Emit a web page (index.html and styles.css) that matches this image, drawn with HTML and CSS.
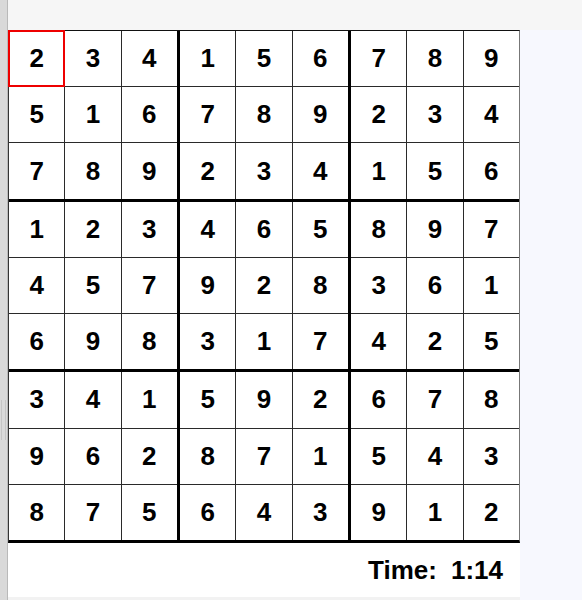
FILE: index.html
```html
<!DOCTYPE html>
<html>
<head>
<meta charset="utf-8">
<link rel="stylesheet" href="styles.css">
</head>
<body>
<div class="window">
  <div class="sidebar"><div class="grip"></div></div>
  <div class="main">
    <div class="topbar"></div>
    <div class="content">
      <div class="panel">
        <div class="board">
          <div class="box">
            <div class="cell selected">2</div><div class="cell">3</div><div class="cell">4</div>
            <div class="cell">5</div><div class="cell">1</div><div class="cell">6</div>
            <div class="cell">7</div><div class="cell">8</div><div class="cell">9</div>
          </div>
          <div class="box">
            <div class="cell">1</div><div class="cell">5</div><div class="cell">6</div>
            <div class="cell">7</div><div class="cell">8</div><div class="cell">9</div>
            <div class="cell">2</div><div class="cell">3</div><div class="cell">4</div>
          </div>
          <div class="box">
            <div class="cell">7</div><div class="cell">8</div><div class="cell">9</div>
            <div class="cell">2</div><div class="cell">3</div><div class="cell">4</div>
            <div class="cell">1</div><div class="cell">5</div><div class="cell">6</div>
          </div>
          <div class="box">
            <div class="cell">1</div><div class="cell">2</div><div class="cell">3</div>
            <div class="cell">4</div><div class="cell">5</div><div class="cell">7</div>
            <div class="cell">6</div><div class="cell">9</div><div class="cell">8</div>
          </div>
          <div class="box">
            <div class="cell">4</div><div class="cell">6</div><div class="cell">5</div>
            <div class="cell">9</div><div class="cell">2</div><div class="cell">8</div>
            <div class="cell">3</div><div class="cell">1</div><div class="cell">7</div>
          </div>
          <div class="box">
            <div class="cell">8</div><div class="cell">9</div><div class="cell">7</div>
            <div class="cell">3</div><div class="cell">6</div><div class="cell">1</div>
            <div class="cell">4</div><div class="cell">2</div><div class="cell">5</div>
          </div>
          <div class="box">
            <div class="cell">3</div><div class="cell">4</div><div class="cell">1</div>
            <div class="cell">9</div><div class="cell">6</div><div class="cell">2</div>
            <div class="cell">8</div><div class="cell">7</div><div class="cell">5</div>
          </div>
          <div class="box">
            <div class="cell">5</div><div class="cell">9</div><div class="cell">2</div>
            <div class="cell">8</div><div class="cell">7</div><div class="cell">1</div>
            <div class="cell">6</div><div class="cell">4</div><div class="cell">3</div>
          </div>
          <div class="box">
            <div class="cell">6</div><div class="cell">7</div><div class="cell">8</div>
            <div class="cell">5</div><div class="cell">4</div><div class="cell">3</div>
            <div class="cell">9</div><div class="cell">1</div><div class="cell">2</div>
          </div>
        </div>
        <div class="timer"><span class="label">Time:</span><span class="value">1:14</span></div>
        <div class="bottom"></div>
      </div>
      <div class="filler"></div>
    </div>
  </div>
</div>
</body>
</html>
```
FILE: styles.css
```css
html, body {
  margin: 0;
  padding: 0;
  background: #f7f8fe;
}
.window {
  display: flex;
  width: 582px;
  height: 600px;
  overflow: hidden;
}
.sidebar {
  width: 7px;
  flex: none;
  background: #d9d9d9;
  border-right: 1px solid #b9b9b9;
}
.grip {
  margin: 400px 0 0 1px;
  width: 3px;
  height: 40px;
  border-left: 1px solid #c4c4c4;
  border-right: 1px solid #c4c4c4;
}
.main {
  flex: 1;
  display: flex;
  flex-direction: column;
}
.topbar {
  height: 30px;
  flex: none;
  background: #f6f6f6;
}
.content {
  flex: 1;
  display: flex;
}
.panel {
  width: 512px;
  flex: none;
  display: flex;
  flex-direction: column;
  background: #ffffff;
}
.filler {
  flex: 1;
  background: #f7f8fe;
}
.board {
  box-sizing: border-box;
  width: 512px;
  height: 513px;
  display: grid;
  grid-template-columns: repeat(3, 1fr);
  grid-template-rows: repeat(3, 1fr);
  gap: 3px;
  background: #000;
  border-top: 1px solid #111;
  border-left: 1px solid #333;
  border-right: 1px solid #777;
  border-bottom: 3px solid #000;
}
.box {
  display: grid;
  grid-template-columns: repeat(3, 1fr);
  grid-template-rows: repeat(3, 1fr);
  gap: 1px;
  background: #2a2a2a;
}
.cell {
  background: #fff;
  display: flex;
  align-items: center;
  justify-content: center;
  font-family: "Liberation Sans", Arial, sans-serif;
  font-weight: bold;
  font-size: 26px;
  color: #000;
  position: relative;
}
.cell.selected::after {
  content: "";
  position: absolute;
  top: -1px;
  left: -1px;
  right: -1px;
  bottom: -1px;
  border: 2px solid #ee0000;
}
.timer {
  height: 54px;
  display: flex;
  align-items: center;
  justify-content: flex-end;
  padding-right: 17px;
  font-family: "Liberation Sans", Arial, sans-serif;
  font-weight: bold;
  font-size: 26px;
  color: #000;
  gap: 14px;
}
.bottom {
  flex: 1;
  background: #f2f2f2;
}
```
